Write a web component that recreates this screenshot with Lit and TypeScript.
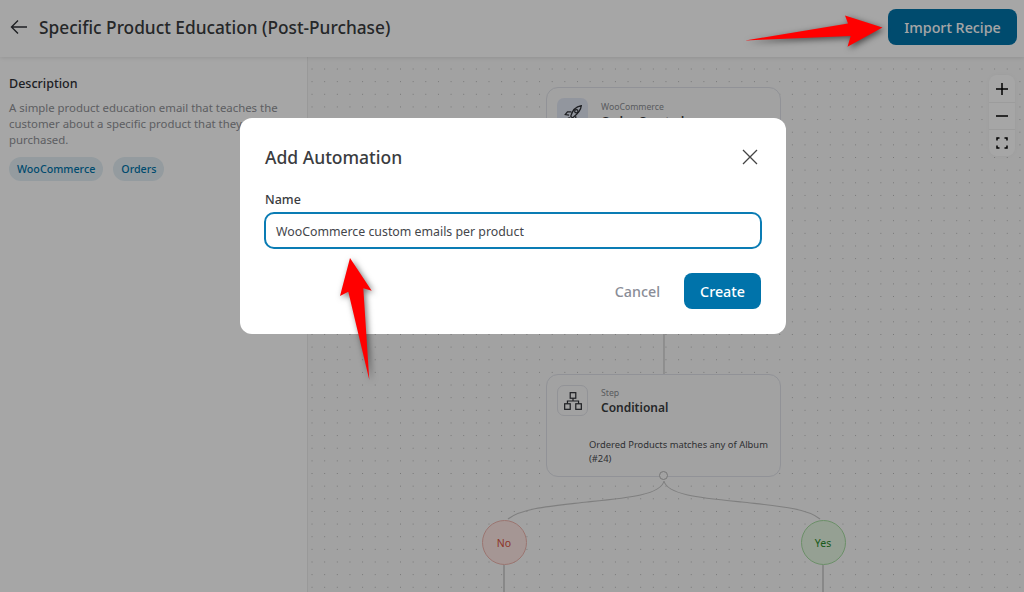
import { LitElement, html, css, svg } from "lit";
import { customElement } from "lit/decorators.js";

const nodeIcon = svg`<rect x="6.5" y="1.5" width="5" height="5" /><rect x="1.5" y="11.5" width="5" height="5"/><rect x="11.5" y="11.5" width="5" height="5"/><path d="M9 6.5V9M4 11.5V9H14V11.5"/>`;
const rocketIcon = svg`<path d="M7 11c1-4 4-8.500 9.500-9.500C16 7 12 10 8.500 12.500zM7.500 7H4L2 9.500l3.500.5M11.500 11v3.500L9 16.500 8.500 13M6 12.500c-1.500 0-3 1.500-3 3 1.500 0 3-1.500 3-3z"/><circle cx="12" cy="6.500" r="1.500"/>`;

@customElement("app-root")
export class AppRoot extends LitElement {
  static styles = css`
    :host { display: block; width: 1024px; height: 592px; position: relative; overflow: hidden;
      font-family: "Noto Sans", sans-serif; color: #2f3136; background: #fff; }
    .page { display: flex; flex-direction: column; height: 592px; }
    header { height: 57px; flex: none; display: flex; align-items: center; gap: 11px; padding: 0 7px 0 10px;
      box-sizing: border-box; background: #fff; box-shadow: 0 1px 4px rgba(0,0,0,.1); position: relative; z-index: 1; }
    .back { width: 18px; height: 18px; margin-top: -3px; fill: none; stroke: #2f3136; stroke-width: 1.4; }
    h1 { margin: -2px 0 0; font-size: 17.300px; font-weight: 500; flex: 1; color: #3a3c40; }
    .import { height: 36px; width: 129px; margin-top: -3px; border: 0; border-radius: 8px; background: #0073aa; color: #fff;
      font: 500 14.300px "Noto Sans", sans-serif; padding: 0; }
    .main { flex: 1; display: flex; min-height: 0; }
    aside { width: 308px; flex: none; box-sizing: border-box; padding: 18px 9px; border-right: 1.500px solid #ececec; background: #fff; }
    aside h2 { margin: 0 0 8px; font-size: 12.500px; line-height: 17px; font-weight: 500; }
    aside p { margin: 0; font-size: 11.400px; line-height: 16px; color: #8f9196; }
    .tags { display: flex; gap: 10px; margin-top: 9px; }
    .tag { height: 24px; padding: 0 8px; border-radius: 12px; background: #e3eff5; color: #0073aa; font-size: 10.700px; font-weight: 500; line-height: 24px; }
    .canvas { flex: 1; position: relative; background-color: #f9f9f9;
      background-image: radial-gradient(circle at center, #b8b8b8 0, #b8b8b8 .5px, transparent .9px);
      background-size: 12.650px 12.650px; background-position: -2.300px 5.700px; }
    .edges { position: absolute; left: -1px; top: 0; width: 717px; height: 535px; fill: none; stroke: #c4c4c4; stroke-width: 1.100; }
    .card { position: absolute; left: 238px; width: 235px; box-sizing: border-box; border: 1px solid #dfe1e8; border-radius: 12px; background: #f9f9f9; }
    .card.first { top: 30px; height: 190px; }
    .card.second { top: 317px; height: 103px; }
    .ic { position: absolute; left: 10px; top: 10px; width: 31px; height: 31px; box-sizing: border-box; border: 1px solid #e0e2e8;
      border-radius: 7px; display: flex; align-items: center; justify-content: center; }
    .first .ic { background: #e1e6f3; border: 0; }
    .ic svg { width: 20px; height: 20px; fill: none; stroke: #2f3136; stroke-width: 1.100; }
    .over { position: absolute; left: 54px; top: 14px; font-size: 8.700px; line-height: 11px; color: #8b8d92; }
    .second .over { top: 13px; }
    .name { position: absolute; left: 54px; top: 25px; font-size: 12px; line-height: 16px; font-weight: 600; color: #3a3c40; }
    .first .name { top: 26px; }
    .detail { position: absolute; left: 42px; top: 63px; width: 186px; font-size: 9.400px; line-height: 13.500px; color: #4a4c50; }
    .port { position: absolute; left: 351px; top: 414px; width: 9px; height: 9px; box-sizing: border-box; border-radius: 50%; background: #f9f9f9; border: 1px solid #b5b5b5; }
    .circle { position: absolute; top: 463px; width: 45px; height: 45px; box-sizing: border-box; border-radius: 50%; border: 1.500px solid;
      display: flex; align-items: center; justify-content: center; font-size: 10.500px; }
    .no { left: 173.500px; background: #fde7e4; border-color: #eeb4ad; color: #d9523f; }
    .yes { left: 492.500px; background: #e5f6e2; border-color: #a5dca0; color: #2a8c2a; }
    .zoom { position: absolute; right: 9px; top: 18px; width: 26px; border-radius: 8px; background: #fff; box-shadow: 0 0 4px rgba(0,0,0,.04); display: flex; flex-direction: column; }
    .zoom div { height: 27px; box-sizing: border-box; display: flex; align-items: center; justify-content: center; }
    .zoom div + div { border-top: 1px solid #f0f0f0; }
    .zoom svg { width: 14px; height: 14px; fill: none; stroke: #000; stroke-width: 1.500; }
    .scrim { position: absolute; inset: 0; z-index: 2; background: rgba(0,0,0,.35); }
    .modal { position: absolute; z-index: 3; left: 240px; top: 118px; width: 546px; height: 216px; box-sizing: border-box; background: #fff; border-radius: 12px;
      padding: 27px 25px 25px 25px; display: flex; flex-direction: column; }
    .mhead { display: flex; justify-content: space-between; align-items: center; height: 24px; }
    .mhead h3 { margin: 0; font-size: 17.500px; font-weight: 500; color: #3a3c40; }
    .close { width: 18px; height: 18px; margin-right: 2px; fill: none; stroke: #444; stroke-width: 1.300; }
    label { display: block; margin-top: 22px; font-size: 12.500px; line-height: 18px; font-weight: 500; color: #3a3c40; }
    .input { margin: 3px -1px 0 -1px; height: 37px; box-sizing: border-box; border: 2px solid #0a7cb4; border-radius: 10px; padding: 1px 10px 0;
      font-size: 12.350px; line-height: 33px; color: #44464b; }
    .actions { display: flex; justify-content: flex-end; align-items: center; gap: 24px; margin-top: 24px; }
    .cancel { font-size: 14.300px; font-weight: 500; color: #8a8d97; }
    .create { width: 77px; height: 36px; border-radius: 8px; background: #0073aa; color: #fff; font-size: 14.300px; font-weight: 500;
      display: flex; align-items: center; justify-content: center; }
    .arrows { position: absolute; z-index: 4; inset: 0; width: 1024px; height: 592px; pointer-events: none; filter: drop-shadow(2px 2px 3px rgba(0,0,0,.55)); }
    .arrows polygon { fill: #f00; }
  `;

  render() {
    return html`
      <div class="page">
        <header>
          <svg class="back" viewBox="0 0 18 18"><path d="M17 9H1.500M8 2.500 1.500 9 8 15.500"/></svg>
          <h1>Specific Product Education (Post-Purchase)</h1>
          <button class="import">Import Recipe</button>
        </header>
        <div class="main">
          <aside>
            <h2>Description</h2>
            <p>A simple product education email that teaches the customer about a specific product that they purchased.</p>
            <div class="tags"><span class="tag">WooCommerce</span><span class="tag">Orders</span></div>
          </aside>
          <div class="canvas">
            <svg class="edges" viewBox="0 0 717 535">
              <path d="M357 220V317"/>
              <path d="M357 424C354 438 320 441 280 445C245 449 215 451 201 462M357 424C360 438 395 441 435 445C470 449 500 451 513 462"/>
              <path d="M197 508V535M516 508V535" stroke-width="1.500"/>
            </svg>
            <div class="card first">
              <div class="ic"><svg viewBox="0 0 18 18">${rocketIcon}</svg></div>
              <div class="over">WooCommerce</div>
              <div class="name">Order Created</div>
            </div>
            <div class="card second">
              <div class="ic"><svg viewBox="0 0 18 18">${nodeIcon}</svg></div>
              <div class="over">Step</div>
              <div class="name">Conditional</div>
              <div class="detail">Ordered Products matches any of Album (#24)</div>
            </div>
            <div class="port"></div>
            <div class="circle no">No</div>
            <div class="circle yes">Yes</div>
            <div class="zoom">
              <div><svg viewBox="0 0 14 14"><path d="M7 1v12M1 7h12"/></svg></div>
              <div><svg viewBox="0 0 14 14"><path d="M1 7h12"/></svg></div>
              <div><svg viewBox="0 0 14 14"><path d="M2 4.500V2h2.500M9.500 2H12v2.500M12 9.500V12H9.500M4.500 12H2V9.500"/></svg></div>
            </div>
          </div>
        </div>
      </div>
      <div class="scrim"></div>
      <div class="modal">
        <div class="mhead">
          <h3>Add Automation</h3>
          <svg class="close" viewBox="0 0 18 18"><path d="M2 2l14 14M16 2 2 16"/></svg>
        </div>
        <label>Name</label>
        <div class="input">WooCommerce custom emails per product</div>
        <div class="actions"><span class="cancel">Cancel</span><span class="create">Create</span></div>
      </div>
      <svg class="arrows" viewBox="0 0 1024 592">
        <polygon points="745,40.500 848,23.500 845,15.500 882.500,27.500 847.500,46.700 850.700,36"/>
        <polygon points="350,258 371.700,290.700 363.300,288.300 369.300,380 348.300,291.700 340,296"/>
      </svg>
    `;
  }
}
